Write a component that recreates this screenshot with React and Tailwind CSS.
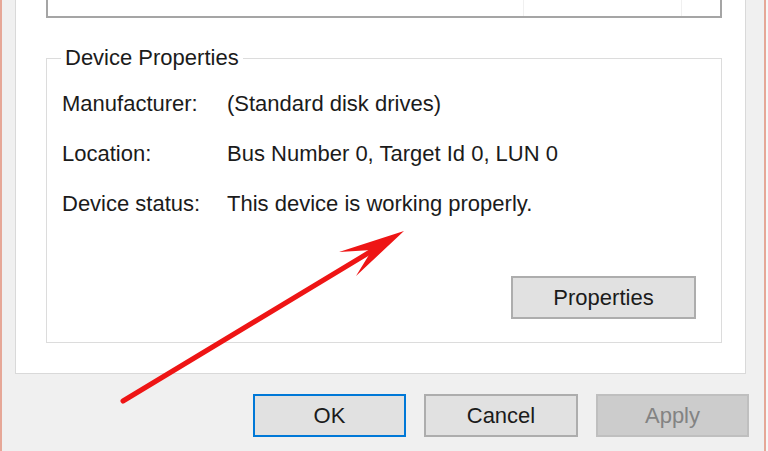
import React from "react";

const font = { fontFamily: '"Liberation Sans", Arial, sans-serif' };

function Row({ label, value }) {
  return (
    <div className="flex h-[50px] items-start">
      <div className="w-[165px] text-[22px] leading-[26px] text-[#1b1b1b]">{label}</div>
      <div className="text-[22px] leading-[26px] text-[#1b1b1b]">{value}</div>
    </div>
  );
}

export default function App() {
  return (
    <div
      className="relative flex h-[451px] w-[768px] overflow-hidden bg-[#f0f0f0]"
      style={font}
    >
      <div className="w-[2px] bg-[#e6a797]" />
      <div className="flex flex-1 flex-col">
        {/* tab panel */}
        <div className="ml-[13px] mr-[18px] flex h-[374px] flex-col border-x border-b border-[#d9d9d9] bg-white pl-[30px] pr-[23px]">
          {/* list box bottom */}
          <div className="relative h-[18px] border-x-2 border-b-2 border-[#a5a5a5] bg-white">
            <div className="absolute left-[475px] top-0 h-full w-px bg-[#f0f0f0]" />
            <div className="absolute left-[633px] top-0 h-full w-px bg-[#f0f0f0]" />
          </div>
          {/* group box */}
          <div className="relative mt-[40px] flex h-[285px] flex-col border border-[#dcdcdc] pl-[15px] pr-[25px] pt-[32px]">
            <div className="absolute left-[14px] top-[-14px] bg-white px-[4px] text-[22px] leading-[26px] text-[#1b1b1b]">
              Device Properties
            </div>
            <Row label="Manufacturer:" value="(Standard disk drives)" />
            <Row label="Location:" value="Bus Number 0, Target Id 0, LUN 0" />
            <Row label="Device status:" value="This device is working properly." />
            <div className="mt-[35px] flex justify-end">
              <div className="flex h-[43px] w-[185px] items-center justify-center border-2 border-[#adadad] bg-[#e1e1e1] text-[22px] text-[#1b1b1b]">
                Properties
              </div>
            </div>
          </div>
        </div>
        {/* dialog buttons */}
        <div className="mt-[20px] flex gap-[18px] pl-[251px]">
          <div className="flex h-[43px] w-[153px] items-center justify-center border-2 border-[#0078d7] bg-[#e1e1e1] text-[22px] text-[#1b1b1b]">
            OK
          </div>
          <div className="flex h-[43px] w-[154px] items-center justify-center border-2 border-[#adadad] bg-[#e1e1e1] text-[22px] text-[#1b1b1b]">
            Cancel
          </div>
          <div className="flex h-[43px] w-[153px] items-center justify-center border-2 border-[#bfbfbf] bg-[#cccccc] text-[22px] text-[#838383]">
            Apply
          </div>
        </div>
      </div>
      <div className="w-[2px] bg-[#e6a797]" />
      <div className="w-[2px] bg-[#f7f7f7]" />

      {/* red annotation arrow */}
      <svg
        className="pointer-events-none absolute left-0 top-0"
        width="768"
        height="451"
        viewBox="0 0 768 451"
      >
        <line
          x1="123"
          y1="401"
          x2="375"
          y2="249"
          stroke="#ee1515"
          strokeWidth="5"
          strokeLinecap="round"
        />
        <polygon points="404,231 339,252 372,250 356,276" fill="#ee1515" />
      </svg>
    </div>
  );
}
